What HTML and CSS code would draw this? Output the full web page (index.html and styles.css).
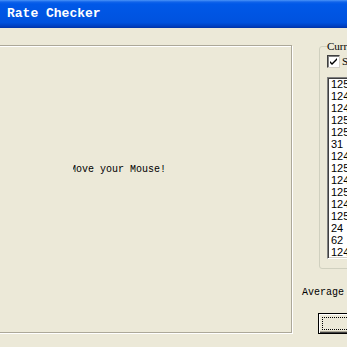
FILE: index.html
```html
<!DOCTYPE html>
<html lang="en">

<head>
    <meta charset="UTF-8">
    <title>Rate Checker</title>
    <link rel="stylesheet" href="styles.css">
</head>

<body>
    <div class="window">
        <!-- barra del titolo -->
        <div class="titlebar">Rate Checker</div>

        <div class="client">
            <!-- area dove si muove il mouse -->
            <div class="screen">
                <div class="hint">Move your Mouse!</div>
            </div>

            <!-- colonna destra -->
            <div class="side">
                <fieldset class="group">
                    <legend>Current Rate</legend>
                    <label class="check-row">
                        <span class="check">
                            <svg width="9" height="9" viewBox="0 0 9 9">
                                <path d="M1 4 L3 6 L8 1 L8 3 L3 8 L1 6 Z" fill="#000" />
                            </svg>
                        </span>
                        <span>Show</span>
                    </label>
                    <div class="listbox">
                        <div>125</div>
                        <div>124</div>
                        <div>124</div>
                        <div>125</div>
                        <div>125</div>
                        <div>31</div>
                        <div>124</div>
                        <div>125</div>
                        <div>124</div>
                        <div>125</div>
                        <div>124</div>
                        <div>125</div>
                        <div>24</div>
                        <div>62</div>
                        <div>124</div>
                    </div>
                </fieldset>

                <div class="average">Average</div>

                <button class="btn"><span class="focus"></span></button>
            </div>
        </div>

        <div class="frame-bottom"></div>
    </div>
</body>

</html>
```

FILE: styles.css
```css
/* pagina */
body {
    margin: 0;
    width: 347px;
    height: 347px;
    overflow: hidden;
    background: #ece9d8;
}

.window {
    display: flex;
    flex-direction: column;
    height: 347px;
}

/* barra del titolo stile XP */
.titlebar {
    flex: none;
    height: 28px;
    box-sizing: border-box;
    padding: 7px 0 0 7px;
    font-family: "Liberation Mono", monospace;
    font-weight: bold;
    font-size: 13px;
    line-height: 14px;
    color: #fff;
    background: linear-gradient(to bottom, #4a94f8 0, #1063ea 2px, #0058e8 4px, #0055e3 50%, #0052de 80%, #0042c4 92%, #0033a8 100%);
}

.client {
    flex: 1;
    display: flex;
    min-height: 0;
}

/* pannello a sinistra con bordo inciso */
.screen {
    flex: none;
    box-sizing: border-box;
    width: 296px;
    height: 288px;
    margin: 17px 0 0 -4px;
    border: 1px solid #aca899;
    box-shadow: 1px 1px 0 #fff, inset 1px 1px 0 #fff;
    padding-top: 118px;
}

.hint {
    margin-left: 76px;
    width: 96px;
    overflow: hidden;
    white-space: nowrap;
    text-indent: -3px;
    font-family: "Liberation Mono", monospace;
    font-size: 10px;
    line-height: 12px;
    color: #000;
}

.side {
    flex: none;
    width: 140px;
    margin-left: 10px;
    padding-top: 12px;
    font-family: "Liberation Serif", serif;
    font-size: 11px;
    color: #000;
}

/* groupbox */
.group {
    margin: 0 0 0 17px;
    width: 110px;
    padding: 0 0 9px 7px;
    border: 1px solid #d0d0bf;
    border-radius: 3px;
}

.group legend {
    padding: 0 1px 0 0;
    line-height: 12px;
}

.check-row {
    display: flex;
    align-items: center;
    gap: 2px;
    height: 13px;
    margin-top: 3px;
    line-height: 13px;
}

.check {
    box-sizing: border-box;
    width: 13px;
    height: 13px;
    border: 1px solid #404040;
    border-right-color: #d4d0c8;
    border-bottom-color: #d4d0c8;
    box-shadow: inset 1px 1px 0 #808080;
    background: #fff;
    display: flex;
    align-items: center;
    justify-content: center;
}

.listbox {
    box-sizing: border-box;
    width: 100px;
    height: 182px;
    margin-top: 9px;
    overflow: hidden;
    background: #fff;
    border: 1px solid #808080;
    border-right-color: #fff;
    border-bottom-color: #fff;
    box-shadow: inset 1px 1px 0 #404040, inset -1px -1px 0 #d4d0c8;
    padding: 0 0 0 3px;
    font-family: "Liberation Sans", sans-serif;
    font-size: 11px;
    line-height: 12px;
}

.average {
    margin-top: 18px;
    font-family: "Liberation Mono", monospace;
    font-size: 10px;
    line-height: 12px;
}

/* pulsante predefinito */
.btn {
    display: block;
    box-sizing: border-box;
    width: 75px;
    height: 21px;
    margin: 14px 0 0 16px;
    padding: 3px;
    border: 1px solid #000;
    background: #ece9d8;
    box-shadow: inset 1px 1px 0 #fff, inset -1px -1px 0 #404040, inset -2px -2px 0 #aca899;
}

.focus {
    display: block;
    height: 100%;
    box-sizing: border-box;
    border: 1px dotted #000;
}
```
